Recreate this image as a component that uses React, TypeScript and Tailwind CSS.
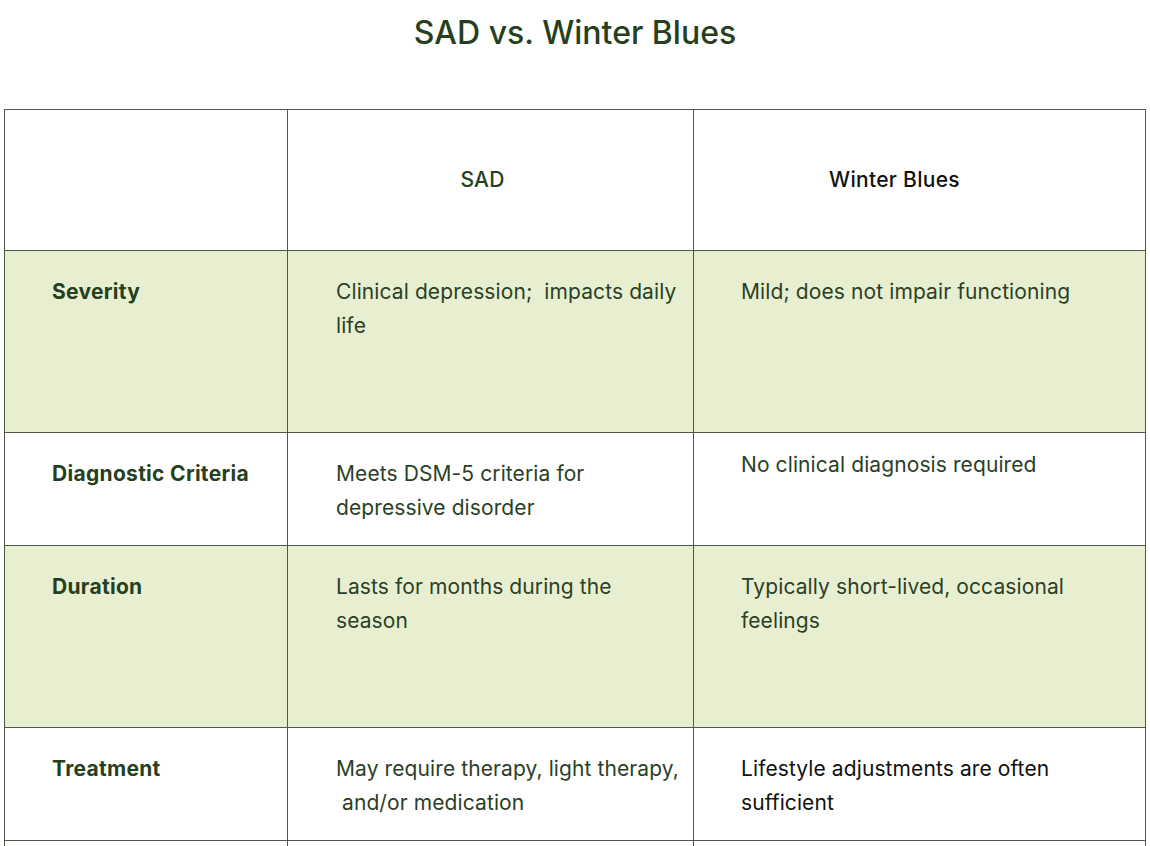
import React from "react";

const rows = [
  {
    label: "Severity",
    sad: "Clinical depression;\u00a0 impacts daily life",
    blues: "Mild; does not impair functioning",
    green: true,
    h: "h-[182px]",
    bluesTop: "pt-[24px]",
    bluesColor: "text-[#2b3f26]",
  },
  {
    label: "Diagnostic Criteria",
    sad: "Meets DSM-5 criteria for depressive disorder",
    blues: "No clinical diagnosis required",
    green: false,
    h: "h-[113px]",
    bluesTop: "pt-[15px]",
    bluesColor: "text-[#2b3f26]",
  },
  {
    label: "Duration",
    sad: "Lasts for months during the season",
    blues: "Typically short-lived, occasional feelings",
    green: true,
    h: "h-[182px]",
    bluesTop: "pt-[24px]",
    bluesColor: "text-[#2b3f26]",
  },
  {
    label: "Treatment",
    sad: "May require therapy, light therapy,\n\u00a0and/or medication",
    blues: "Lifestyle adjustments are often sufficient",
    green: false,
    h: "h-[113px]",
    bluesTop: "pt-[24px]",
    bluesColor: "text-[#111111]",
  },
];

export default function App() {
  return (
    <div className="w-[1150px] min-h-[846px] bg-white font-['Inter',sans-serif] overflow-hidden">
      <h1 className="text-center text-[32px] font-medium leading-[40px] text-[#263f1e] pt-[13px]">
        SAD vs. Winter Blues
      </h1>
      <table className="mt-[56px] ml-[4px] w-[1141px] border-collapse table-fixed">
        <colgroup>
          <col className="w-[283px]" />
          <col className="w-[406px]" />
          <col className="w-[452px]" />
        </colgroup>
        <tbody>
          <tr className="h-[141px]">
            <td className="border border-[#4e5a48]"></td>
            <td className="border border-[#4e5a48] text-center align-middle pr-[16px] text-[21px] tracking-[0.2px] font-medium text-[#263f1e]">
              SAD
            </td>
            <td className="border border-[#4e5a48] text-center align-middle pr-[50px] text-[21px] tracking-[0.3px] font-medium text-[#111111]">
              Winter Blues
            </td>
          </tr>
          {rows.map((r) => (
            <tr key={r.label} className={`${r.h} ${r.green ? "bg-[#e8efd0]" : "bg-white"}`}>
              <td className="border border-[#4e5a48] align-top pl-[47px] pr-[10px] pt-[24px] text-[21px] leading-[34px] tracking-[0.3px] font-bold text-[#263f1e]">
                {r.label}
              </td>
              <td className="border border-[#4e5a48] align-top pl-[48px] pr-[12px] pt-[24px] text-[21px] leading-[34px] tracking-[0.1px] text-[#2b3f26] whitespace-pre-line">
                {r.sad}
              </td>
              <td className={`border border-[#4e5a48] align-top pl-[47px] pr-[60px] ${r.bluesTop} text-[21px] leading-[34px] tracking-[0.1px] ${r.bluesColor}`}>
                {r.blues}
              </td>
            </tr>
          ))}
          <tr className="h-[40px]">
            <td className="border border-[#4e5a48]"></td>
            <td className="border border-[#4e5a48]"></td>
            <td className="border border-[#4e5a48]"></td>
          </tr>
        </tbody>
      </table>
    </div>
  );
}
